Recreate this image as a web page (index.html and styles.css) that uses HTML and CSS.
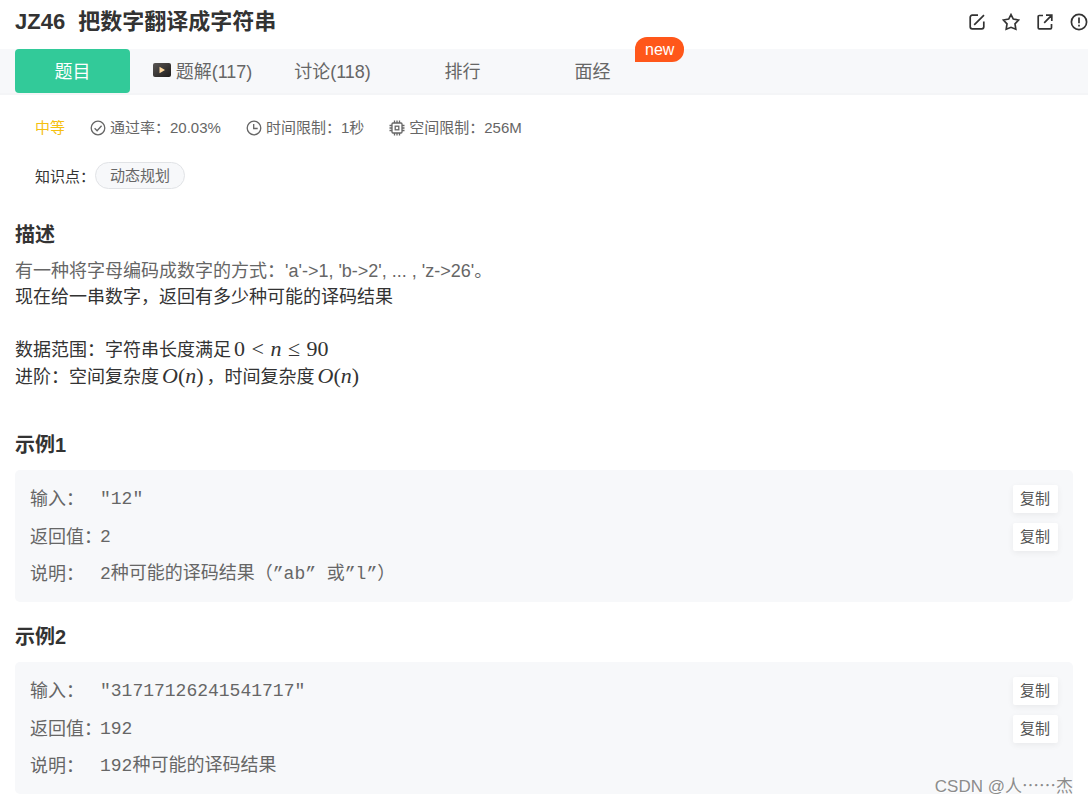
FILE: index.html
```html
<!DOCTYPE html>
<html lang="zh-CN">
<head>
  <meta charset="UTF-8" />
  <meta name="viewport" content="width=device-width, initial-scale=1" />
  <title>JZ46 把数字翻译成字符串</title>
  <link rel="stylesheet" href="styles.css">
</head>
<body>

<header class="header">
  <h1><span>JZ46</span><span>把数字翻译成字符串</span></h1>
  <div class="actions">
    <button type="button" aria-label="编辑">
      <svg viewBox="0 0 18 18"><path d="M10 2.2H4.2a2 2 0 0 0-2 2v9.6a2 2 0 0 0 2 2h9.6a2 2 0 0 0 2-2V8.5M6.2 11.8L16 2.2" /></svg>
    </button>
    <button type="button" aria-label="收藏">
      <svg viewBox="0 0 18 18"><path d="M9 1.6l2.3 4.5 5.3.9-3.6 3.8.8 5.4L9 14.3l-4.8 1.9.8-5.4L1.4 7l5.3-.9z" /></svg>
    </button>
    <button type="button" aria-label="分享">
      <svg viewBox="0 0 18 18"><path d="M7 2.5H3.2a1 1 0 0 0-1 1v11.3a1 1 0 0 0 1 1h11.3a1 1 0 0 0 1-1V11M10 2.2h5.8V8M15.8 2.2L8.2 9.8" /></svg>
    </button>
    <button type="button" aria-label="反馈">
      <svg viewBox="0 0 18 18"><circle cx="9" cy="9" r="7.6" /><path d="M9 4.5v5.7M9 11.8v1.8" /></svg>
    </button>
  </div>
</header>

<nav class="tabs">
  <a href="#" class="tab active">题目</a>
  <a href="#" class="tab">
    <svg class="video" viewBox="0 0 18 14">
      <defs>
        <linearGradient id="videoBg" x1="0" y1="0" x2="1" y2="1">
          <stop offset="0" stop-color="#5a5654" />
          <stop offset="1" stop-color="#1d1a19" />
        </linearGradient>
      </defs>
      <rect width="18" height="14" rx="2" fill="url(#videoBg)" />
      <path d="M6.5 3.8l5.5 3.2-5.5 3.2z" fill="#ffd9a0" />
    </svg>题解(117)
  </a>
  <a href="#" class="tab">讨论(118)</a>
  <a href="#" class="tab">排行</a>
  <a href="#" class="tab">面经<span class="badge">new</span></a>
</nav>

<main>
  <div class="meta">
    <span class="level">中等</span>
    <span class="meta-item">
      <svg viewBox="0 0 16 16"><circle cx="8" cy="8" r="6.8" /><path d="M4.6 8.2l2.5 2.5 4.5-5" /></svg>
      通过率：20.03%
    </span>
    <span class="meta-item">
      <svg viewBox="0 0 16 16"><circle cx="8" cy="8" r="6.8" /><path d="M7.7 4v4.5h4" /></svg>
      时间限制：1秒
    </span>
    <span class="meta-item">
      <svg viewBox="0 0 16 16"><rect x="3" y="3" width="10" height="10" rx="1" /><rect x="6.2" y="6.2" width="3.6" height="3.6" /><path d="M5.5 3V.5M8 3V.5M10.5 3V.5M5.5 15.5V13M8 15.5V13M10.5 15.5V13M3 5.5H.5M3 8H.5M3 10.5H.5M15.5 5.5H13M15.5 8H13M15.5 10.5H13" /></svg>
      空间限制：256M
    </span>
  </div>

  <div class="topics">
    <span>知识点：</span>
    <a href="#" class="tag">动态规划</a>
  </div>

  <h2>描述</h2>
  <div class="desc">
    <p class="intro">有一种将字母编码成数字的方式：'a'-&gt;1, 'b-&gt;2', ... , 'z-&gt;26'。</p>
    <p>现在给一串数字，返回有多少种可能的译码结果</p>
    <p class="range">数据范围：字符串长度满足<span class="math">0 <b>&lt;</b> <i>n</i> <b>≤</b> 90</span></p>
    <p>进阶：空间复杂度<span class="math"><i>O</i>(<i>n</i>)</span>，时间复杂度<span class="math"><i>O</i>(<i>n</i>)</span></p>
  </div>

  <h2>示例1</h2>
  <div class="sample">
    <div class="row">
      <span class="label">输入：</span>
      <code>"12"</code>
      <button type="button" class="copy">复制</button>
    </div>
    <div class="row">
      <span class="label">返回值：</span>
      <code>2</code>
      <button type="button" class="copy">复制</button>
    </div>
    <div class="row">
      <span class="label">说明：</span>
      <code>2种可能的译码结果（”ab” 或”l”）</code>
    </div>
  </div>

  <h2>示例2</h2>
  <div class="sample">
    <div class="row">
      <span class="label">输入：</span>
      <code>"31717126241541717"</code>
      <button type="button" class="copy">复制</button>
    </div>
    <div class="row">
      <span class="label">返回值：</span>
      <code>192</code>
      <button type="button" class="copy">复制</button>
    </div>
    <div class="row">
      <span class="label">说明：</span>
      <code>192种可能的译码结果</code>
    </div>
    <span class="watermark">CSDN @<span class="author">人……杰</span></span>
  </div>
</main>

</body>
</html>
```
FILE: styles.css
```css
* { box-sizing: border-box; }

body {
  margin: 0;
  font-family: "Liberation Sans", "Noto Sans CJK SC", sans-serif;
  font-size: 18px;
  color: #333;
  background: #fff;
}

h1, h2, p { margin: 0; }

a { text-decoration: none; }

button {
  border: none;
  padding: 0;
  font-family: inherit;
  cursor: pointer;
}

svg {
  fill: none;
  stroke: currentColor;
}

.header {
  display: flex;
  align-items: center;
  justify-content: space-between;
  height: 49px;
  padding: 0 0 5px 15px;
}

h1 {
  display: flex;
  gap: 13px;
  font-size: 22px;
  line-height: 32px;
}

.actions {
  display: flex;
  gap: 16px;
}

.actions button {
  display: flex;
  background: none;
  color: #333;
}

.actions svg {
  width: 18px;
  height: 18px;
  stroke-width: 1.7;
}

.tabs {
  display: flex;
  gap: 15px;
  padding-left: 15px;
  background: #f7f8fa;
  border-bottom: 2px solid #f4f5f7;
}

.tab {
  position: relative;
  display: flex;
  align-items: center;
  justify-content: center;
  gap: 5px;
  width: 115px;
  height: 44px;
  padding-bottom: 2px;
  color: #666;
  border-radius: 4px;
  white-space: nowrap;
}

.tab.active {
  background: #32ca99;
  color: #fff;
}

.video {
  width: 18px;
  height: 14px;
  stroke: none;
}

.badge {
  position: absolute;
  top: -12px;
  left: 100px;
  padding: 0 10px;
  border-radius: 12px 12px 12px 0;
  background: #ff571a;
  color: #fff;
  font-size: 16px;
  line-height: 25px;
}

main { padding: 0 15px 11px; }

.meta {
  display: flex;
  align-items: center;
  gap: 25px;
  padding: 20px 20px 0;
  font-size: 15px;
  line-height: 25px;
  color: #666;
}

.level { color: #f5c010; }

.meta-item {
  display: flex;
  align-items: center;
  gap: 4px;
}

.meta-item svg {
  width: 16px;
  height: 16px;
  stroke-width: 1.3;
}

.topics {
  display: flex;
  align-items: center;
  padding: 22px 20px 0;
  font-size: 15px;
}

.tag {
  padding: 0 14px;
  border: 1px solid #e1e3e6;
  border-radius: 14px;
  background: #f7f8fa;
  color: #666;
  line-height: 25px;
}

h2 {
  font-size: 20px;
  line-height: 30px;
}

.topics + h2 { margin-top: 31px; }

.desc {
  padding: 8px 0 40px;
  line-height: 26px;
}

.intro { color: #666; }

.range { margin-top: 26px; }

.math {
  margin: 0 3px;
  font-family: "Liberation Serif", serif;
  font-size: 22px;
}

.math b {
  padding: 0 1px;
  font-weight: normal;
}

.sample {
  position: relative;
  display: flex;
  flex-direction: column;
  gap: 10px;
  margin: 10px 0 20px;
  padding: 15px 15px 14px;
  border-radius: 5px;
  background: #f7f8fa;
  color: #666;
}

.sample:last-child { margin-bottom: 0; }

.row {
  display: flex;
  align-items: center;
  line-height: 27px;
}

.label { width: 70px; white-space: nowrap; }

code { font-family: "Liberation Mono", "Noto Sans CJK SC", monospace; }

.copy {
  margin-left: auto;
  padding: 0 8px 0 7px;
  border-radius: 2px;
  background: #fff;
  box-shadow: 0 2px 6px rgba(0, 0, 0, 0.06);
  color: #555;
  font-size: 15px;
  line-height: 28px;
}

.watermark {
  position: absolute;
  right: 0;
  bottom: -6px;
  color: #8c8c8c;
  font-size: 17px;
  line-height: 26px;
  text-shadow: 1px 1px 1px #fff;
}

.author { font-family: "Noto Sans CJK SC", sans-serif; }
```
